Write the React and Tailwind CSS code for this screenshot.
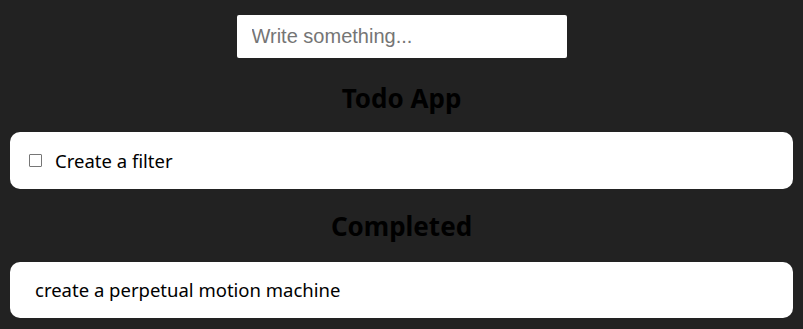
import React from 'react';

const todos = ['Create a filter'];
const completed = ['create a perpetual motion machine'];

const App = () => {
  return (
    <div className="min-h-screen bg-[#222222] flex flex-col items-center pt-[15px] px-[10px] font-['Noto_Sans',sans-serif]">
      {/* New todo input */}
      <input
        type="text"
        placeholder="Write something..."
        className="w-[330px] h-[43px] rounded-[2px] bg-white px-[15px] text-[20px] font-['Liberation_Sans',Arial,sans-serif] text-black placeholder:text-[#757575] outline-none"
      />

      <h2 className="mt-[24px] mb-[18px] text-[26px] leading-[32px] font-bold text-black">Todo App</h2>

      <div className="w-full flex flex-col gap-2">
        {todos.map(t => (
          <div key={t} className="h-[57px] w-full rounded-[10px] bg-white flex items-center pl-[19px] gap-[13px]">
            <span className="w-[13px] h-[13px] border border-[#767676] rounded-[1px] bg-white shrink-0" />
            <span className="text-[18.5px] text-black">{t}</span>
          </div>
        ))}
      </div>

      <h2 className="mt-[21px] mb-[20px] text-[26px] leading-[32px] font-bold text-black">Completed</h2>

      <div className="w-full flex flex-col gap-2">
        {completed.map(t => (
          <div key={t} className="h-[56px] w-full rounded-[10px] bg-white flex items-center pl-[25px]">
            <span className="text-[18.5px] text-black">{t}</span>
          </div>
        ))}
      </div>
    </div>
  );
};

export default App;
